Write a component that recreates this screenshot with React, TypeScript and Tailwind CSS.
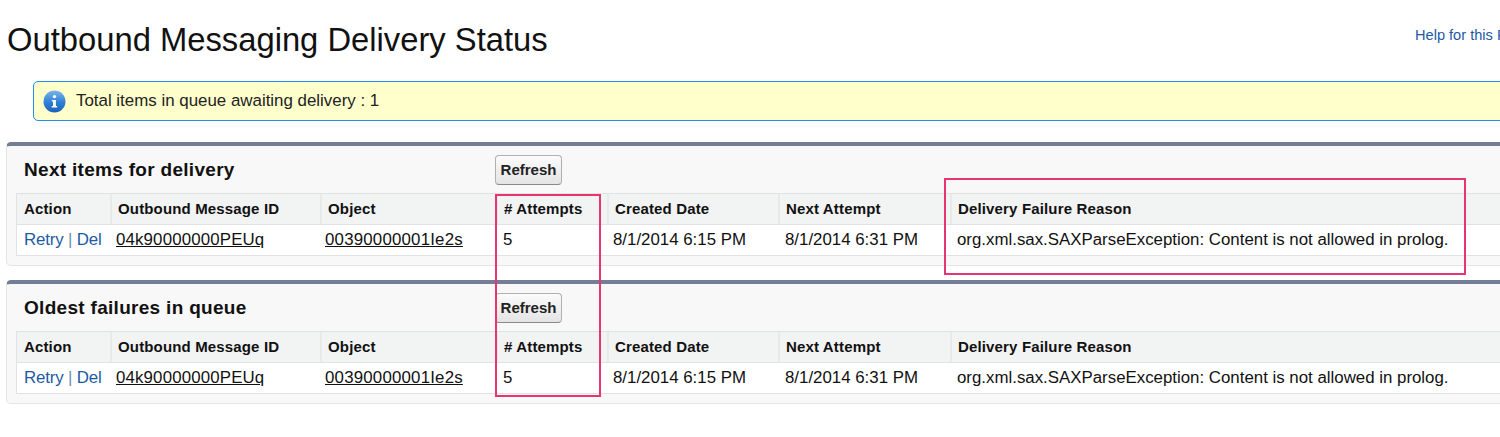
import React from 'react';

const columns = [
  { label: 'Action', w: 'w-[93px]' },
  { label: 'Outbound Message ID', w: 'w-[210px]' },
  { label: 'Object', w: 'w-[176px]' },
  { label: '# Attempts', w: 'w-[111px]' },
  { label: 'Created Date', w: 'w-[171px]' },
  { label: 'Next Attempt', w: 'w-[172px]' },
  { label: 'Delivery Failure Reason', w: 'w-[540px]' },
];

function InfoIcon() {
  return (
    <svg width="23" height="23" viewBox="0 0 23 23" className="shrink-0">
      <defs>
        <linearGradient id="infoFill" x1="0" y1="0" x2="0" y2="1">
          <stop offset="0" stopColor="#7db4ea" />
          <stop offset="0.55" stopColor="#2f7fd6" />
          <stop offset="1" stopColor="#1b62b8" />
        </linearGradient>
      </defs>
      <circle cx="11.5" cy="11.5" r="11" fill="url(#infoFill)" />
      <circle cx="11.5" cy="6.6" r="1.7" fill="#fff" />
      <path d="M8.9 10h4v6h1.3v1.6H8.7V16H10v-4.4H8.9z" fill="#fff" />
    </svg>
  );
}

function Panel({ title, mt }: { title: string; mt: string }) {
  return (
    <div className={`${mt} ml-[6px] w-[1520px] h-[124px] border-t-[4px] border-t-[#737e96] border-x border-b border-x-[#e3e5e5] border-b-[#e3e5e5] rounded-[5px] bg-[#f8f8f8] pl-[9px]`}>
      <div className="flex items-center h-[47px]">
        <h2 className="w-[479px] pl-[8px] text-[19px] leading-none font-bold text-[#111] tracking-[0.3px]">{title}</h2>
        <button className="w-[67px] h-[30px] pt-[1px] border border-[#b0b0b0] border-b-[#8a8a8a] rounded-[4px] bg-gradient-to-b from-[#fbfbfb] to-[#e4e4e4] text-[15px] font-bold text-[#222]">
          Refresh
        </button>
      </div>
      <div className="border border-[#e0e3e5]">
        <div className="flex h-[31px] bg-[#f2f3f3] border-b border-[#e0e3e5]">
          {columns.map((c, i) => (
            <div
              key={c.label}
              className={`${c.w} shrink-0 flex items-center pt-[1px] text-[15px] font-bold text-[#111] tracking-[0.15px] ${i > 0 ? 'pl-[6px] border-l-2 border-[#e8eaea]' : 'pl-[7px]'}`}
            >
              {c.label}
            </div>
          ))}
        </div>
        <div className="flex h-[30px] items-center bg-white text-[16.85px] text-[#111]">
          <div className="w-[93px] shrink-0 pl-[7px] text-[#1c5aa3] tracking-[-0.15px]">
            Retry <span className="text-[#6d8fb5]">|</span> Del
          </div>
          <div className="w-[210px] shrink-0 pl-[6px] underline tracking-[0.15px]">04k90000000PEUq</div>
          <div className="w-[176px] shrink-0 pl-[5px] underline tracking-[0.2px]">00390000001Ie2s</div>
          <div className="w-[111px] shrink-0 pl-[7px]">5</div>
          <div className="w-[171px] shrink-0 pl-[6px]">8/1/2014 6:15 PM</div>
          <div className="w-[172px] shrink-0 pl-[7px]">8/1/2014 6:31 PM</div>
          <div className="w-[540px] shrink-0 pl-[7px]">org.xml.sax.SAXParseException: Content is not allowed in prolog.</div>
        </div>
      </div>
    </div>
  );
}

export default function App() {
  return (
    <div className="relative w-[1500px] h-[437px] overflow-hidden bg-white font-['Liberation_Sans',Arial,sans-serif]">
      <div className="flex justify-between pt-[21px] pl-[7px] h-[81px]">
        <h1 className="text-[32.75px] leading-[38px] font-normal text-[#111]">Outbound Messaging Delivery Status</h1>
        <a className="w-[85px] pt-[5px] text-[14.6px] leading-[18px] text-[#1c5aa3] whitespace-nowrap">Help for this Page</a>
      </div>
      <div className="ml-[33px] w-[1500px] h-[40px] flex items-center gap-[10px] pl-[9px] border border-[#1e8bff] rounded-[5px] bg-[#ffffcc]">
        <InfoIcon />
        <span className="text-[16.9px] text-[#222]">Total items in queue awaiting delivery : 1</span>
      </div>
      <Panel title="Next items for delivery" mt="mt-[21px]" />
      <Panel title="Oldest failures in queue" mt="mt-[14px]" />

      {/* callouts drawn over the screenshot */}
      <div className="absolute left-[495px] top-[194px] w-[106px] h-[203px] border-2 border-[#e8356f] pointer-events-none" />
      <div className="absolute left-[944px] top-[178px] w-[522px] h-[97px] border-2 border-[#e8356f] pointer-events-none" />
    </div>
  );
}
